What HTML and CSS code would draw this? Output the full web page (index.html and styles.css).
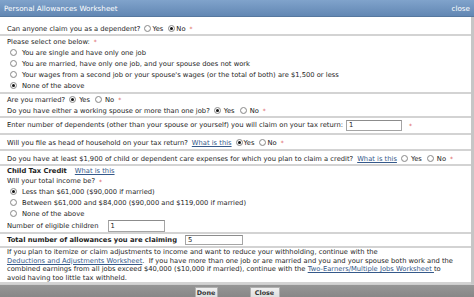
FILE: index.html
```html
<!DOCTYPE html>
<html>
<head>
<meta charset="utf-8">
<title>Personal Allowances Worksheet</title>
<link rel="stylesheet" href="styles.css">
</head>
<body>
<div class="dialog">
  <div class="titlebar"><span>Personal Allowances Worksheet</span><span class="close">close</span></div>
  <div class="content">
    <div class="sec sec-b">
      <div class="line">Can anyone claim you as a dependent?<span class="opt tight q"><span class="r"></span>Yes</span><span class="opt tight"><span class="r on"></span>No</span><span class="req">*</span></div>
    </div>
    <div class="sec sec-c">
      <div class="line">Please select one below:<span class="req">*</span></div>
      <div class="line sub"><span class="r"></span>You are single and have only one job</div>
      <div class="line sub"><span class="r"></span>You are married, have only one job, and your spouse does not work</div>
      <div class="line sub"><span class="r"></span>Your wages from a second job or your spouse's wages (or the total of both) are $1,500 or less</div>
      <div class="line sub"><span class="r on"></span>None of the above</div>
    </div>
    <div class="sec sec-d">
      <div class="line">Are you married?<span class="opt q"><span class="r on"></span>Yes</span><span class="opt"><span class="r"></span>No</span><span class="req">*</span></div>
      <div class="line">Do you have either a working spouse or more than one job?<span class="opt q"><span class="r on"></span>Yes</span><span class="opt"><span class="r"></span>No</span><span class="req">*</span></div>
    </div>
    <div class="sec sec-e">
      <div class="line tall">Enter number of dependents (other than your spouse or yourself) you will claim on your tax return:<span class="field dep">1</span><span class="req far">*</span></div>
    </div>
    <div class="sec sec-f">
      <div class="line">Will you file as head of household on your tax return?<a class="link q">What is this</a><span class="opt tight q"><span class="r on"></span>Yes</span><span class="opt tight"><span class="r"></span>No</span><span class="req">*</span></div>
    </div>
    <div class="sec sec-g">
      <div class="line">Do you have at least $1,900 of child or dependent care expenses for which you plan to claim a credit?<a class="link q">What is this</a><span class="opt q"><span class="r"></span>Yes</span><span class="opt"><span class="r"></span>No</span><span class="req">*</span></div>
    </div>
    <div class="sec sec-h">
      <div class="line short"><b>Child Tax Credit</b><a class="link ctc">What is this</a></div>
      <div class="line short">Will your total income be?<span class="req">*</span></div>
      <div class="line sub"><span class="r on"></span>Less than $61,000 ($90,000 if married)</div>
      <div class="line sub"><span class="r"></span>Between $61,000 and $84,000 ($90,000 and $119,000 if married)</div>
      <div class="line sub"><span class="r"></span>None of the above</div>
      <div class="line kidsrow">Number of eligible children<span class="field kids">1</span></div>
    </div>
    <div class="sec sec-i">
      <div class="line totalrow"><b>Total number of allowances you are claiming</b><span class="field total">5</span></div>
    </div>
    <div class="sec sec-j">
      <div class="pline">If you plan to itemize or claim adjustments to income and want to reduce your withholding, continue with the</div>
      <div class="pline"><a class="link">Deductions and Adjustments Worksheet</a>.&nbsp; If you have more than one job or are married and you and your spouse both work and the</div>
      <div class="pline">combined earnings from all jobs exceed $40,000 ($10,000 if married), continue with the <a class="link">Two-Earners/Multiple Jobs Worksheet </a>to</div>
      <div class="pline">avoid having too little tax withheld.</div>
    </div>
  </div>
  <div class="footer">
    <span class="btn done">Done</span>
    <span class="btn closebtn">Close</span>
  </div>
</div>
</body>
</html>
```

FILE: styles.css
```css
html, body {
  margin: 0;
  padding: 0;
  background: #ffffff;
}
body {
  width: 474px;
  height: 297px;
  overflow: hidden;
  font-family: "DejaVu Sans", Verdana, sans-serif;
  font-size: 6.75px;
  color: #1e1e1e;
}
.dialog {
  width: 474px;
  height: 297px;
  display: flex;
  flex-direction: column;
  overflow: hidden;
}
.titlebar {
  height: 17px;
  flex: none;
  box-sizing: border-box;
  background: linear-gradient(#80a3cb, #6287b3);
  border-bottom: 1px solid #56789f;
  color: #ffffff;
  display: flex;
  align-items: center;
  justify-content: space-between;
  padding: 0 4px 0 4px;
  font-size: 7.2px;
}
.content {
  flex: none;
  width: 471px;
  border-right: 3px solid #c6c6c6;
  display: flex;
  flex-direction: column;
}
.sec {
  border-bottom: 2px solid #d3d3d3;
  padding-left: 7px;
}
.line {
  height: 11px;
  display: flex;
  align-items: center;
  white-space: nowrap;
}
.line.short {
  height: 10px;
}
.line.tall {
  height: 14px;
}
.line.kidsrow {
  height: 13px;
}
.line.totalrow {
  height: 12px;
}
.sub {
  padding-left: 3px;
}
.sub .r {
  margin-right: 5px;
}
.sec-b { padding-top: 6px; padding-bottom: 0; }
.sec-c { padding-top: 0; padding-bottom: 1px; }
.sec-d { padding-top: 0; padding-bottom: 0; }
.sec-e { padding-top: 0; padding-bottom: 1px; }
.sec-f { padding-top: 2px; padding-bottom: 1px; }
.sec-g { padding-top: 2px; padding-bottom: 0; }
.sec-h { padding-top: 0; padding-bottom: 0; }
.sec-i { padding-top: 0; padding-bottom: 0; }
.sec-j { padding-top: 0; padding-bottom: 0; }

.r {
  display: inline-block;
  box-sizing: border-box;
  width: 7px;
  height: 7px;
  border-radius: 50%;
  border: 1px solid #8a8a8a;
  background: radial-gradient(circle at 50% 40%, #ffffff 40%, #e4e4e4 100%);
  position: relative;
  flex: none;
}
.r.on::after {
  content: "";
  position: absolute;
  left: 1px;
  top: 1px;
  width: 3px;
  height: 3px;
  border-radius: 50%;
  background: #111111;
}
.opt {
  display: inline-flex;
  align-items: center;
  gap: 3px;
  margin-left: 5px;
}
.opt.tight {
  gap: 1px;
}
.opt.q {
  margin-left: 4px;
}
.req {
  color: #d9534f;
  font-size: 6px;
  margin-left: 4px;
}
.req.far {
  margin-left: 7px;
}
.link {
  color: #35598a;
  text-decoration: underline;
}
.link.q {
  margin-left: 4px;
}
.link.ctc {
  margin-left: 8px;
}
.field {
  display: inline-flex;
  align-items: center;
  box-sizing: border-box;
  height: 11px;
  border: 1px solid #a5a5a5;
  border-top-color: #8c8c8c;
  background: #ffffff;
  padding-left: 2px;
}
.field.dep {
  width: 56px;
  margin-left: 3px;
}
.field.kids {
  width: 57px;
  height: 12px;
  margin-left: 9px;
}
.field.total {
  width: 58px;
  height: 10px;
  margin-left: 8px;
}
.pline {
  height: 8.5px;
  line-height: 8.5px;
  white-space: nowrap;
}
.footer {
  flex: 1;
  background: linear-gradient(#969696, #858585);
  border-top: 1px solid #cdcdcd;
  display: flex;
  justify-content: center;
  align-items: flex-start;
  gap: 32px;
  padding-top: 2px;
}
.btn {
  box-sizing: border-box;
  height: 12px;
  display: inline-flex;
  align-items: center;
  justify-content: center;
  background: linear-gradient(#f0f0f0, #dcdcdc);
  border: 1px solid #b0b0b0;
  font-weight: bold;
  color: #333333;
  font-size: 6.4px;
}
.btn.done { width: 23px; }
.btn.closebtn { width: 30px; }
```
